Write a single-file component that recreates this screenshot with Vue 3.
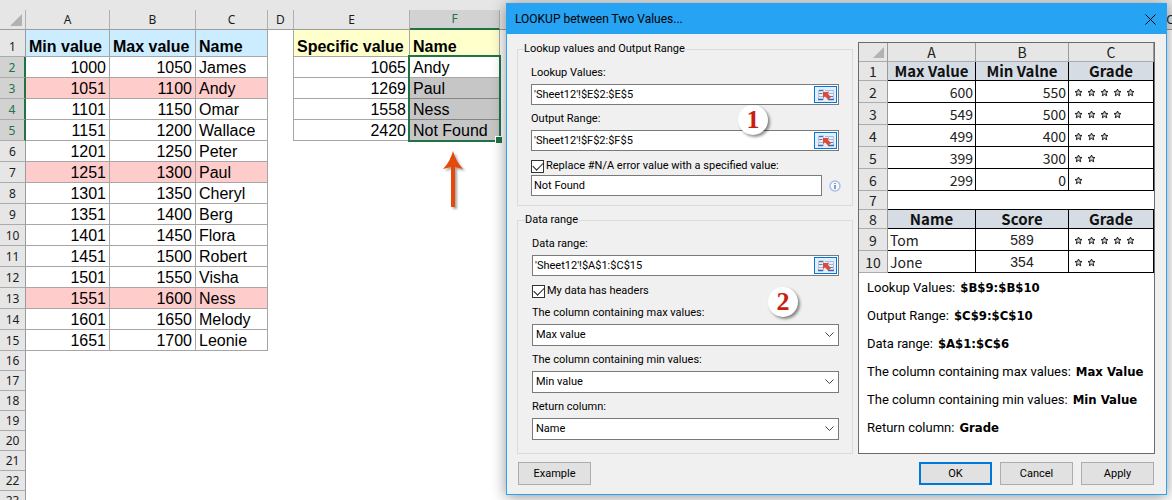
<script setup>
import { ref } from 'vue'

const columns = ['A', 'B', 'C', 'D', 'E', 'F']

const names = ['James', 'Andy', 'Omar', 'Wallace', 'Peter', 'Paul', 'Cheryl', 'Berg', 'Flora', 'Robert', 'Visha', 'Ness', 'Melody', 'Leonie']
const specific = [
  [1065, 'Andy'],
  [1269, 'Paul'],
  [1558, 'Ness'],
  [2420, 'Not Found'],
]
const people = names.map((name, i) => ({
  row: i + 2,
  min: i === 0 ? 1000 : 1001 + i * 50,
  max: 1050 + i * 50,
  name,
  match: ['Andy', 'Paul', 'Ness'].includes(name),
  lookup: specific[i],
}))
const emptyRows = [16, 17, 18, 19, 20, 21, 22, 23]

const grades = [
  { row: 2, max: 600, min: 550, stars: 5 },
  { row: 3, max: 549, min: 500, stars: 4 },
  { row: 4, max: 499, min: 400, stars: 3 },
  { row: 5, max: 399, min: 300, stars: 2 },
  { row: 6, max: 299, min: 0, stars: 1 },
]
const scores = [
  { row: 9, name: 'Tom', score: 589, stars: 5 },
  { row: 10, name: 'Jone', score: 354, stars: 2 },
]
const notes = [
  ['Lookup Values:', '$B$9:$B$10'],
  ['Output Range:', '$C$9:$C$10'],
  ['Data range:', '$A$1:$C$6'],
  ['The column containing max values:', 'Max Value'],
  ['The column containing min values:', 'Min Value'],
  ['Return column:', 'Grade'],
]

const lookupValues = ref("'Sheet12'!$E$2:$E$5")
const outputRange = ref("'Sheet12'!$F$2:$F$5")
const replaceError = ref(true)
const errorText = ref('Not Found')
const dataRange = ref("'Sheet12'!$A$1:$C$15")
const hasHeaders = ref(true)
const maxColumn = ref('Max value')
const minColumn = ref('Min value')
const returnColumn = ref('Name')
const fields = ['Min value', 'Max value', 'Name']
</script>

<template>
  <main class="page">
    <svg class="defs" width="0" height="0" aria-hidden="true">
      <symbol id="pick" viewBox="0 0 16 12">
        <rect x="0" y="1" width="16" height="10" fill="#e8eef8" />
        <path d="M1 1.500h5" stroke="#4a6fb0" stroke-width="1.400" />
        <path d="M7 1.500h9M0 4.500h16M0 7.500h16" stroke="#a3b8dc" fill="none" />
        <path d="M.5 1v10M5.500 1v10M10.500 1v10M15.500 1v10" stroke="#b4c5e3" fill="none" />
        <path d="M0 10.500h5M10 10.500h6" stroke="#3d63a8" stroke-width="1.400" />
        <path d="M1 4.500h3M12 7.500h3" stroke="#5d7fba" stroke-width="1.200" />
        <path d="M5 3h6L9.500 4.500 13 8l-2.800 2.800L7 7.300 5 9z" fill="#dc4a30" />
      </symbol>
      <symbol id="star" viewBox="0 0 9 9">
        <path d="M4.500 1l1 2.300 2.500.2-1.900 1.700.6 2.600-2.200-1.400-2.200 1.400.6-2.600L1 3.500l2.500-.2z" fill="#ccc" stroke="#1a1a1a" stroke-width="1" />
      </symbol>
    </svg>

    <section class="sheet">
      <table class="grid">
        <colgroup>
          <col class="w-row" /><col class="w-a" /><col class="w-b" /><col class="w-c" /><col class="w-d" />
          <col class="w-e" /><col class="w-f" /><col class="w-wide" /><col class="w-o" /><col />
        </colgroup>
        <thead>
          <tr>
            <th class="corner"><svg width="12" height="12" viewBox="0 0 12 12"><path d="M12 0v12H0z" fill="#b2b2b2" /></svg></th>
            <th v-for="c in columns" :key="c" scope="col" :class="{ picked: c === 'F' }">{{ c }}</th>
            <th></th>
            <th scope="col">O</th>
            <th class="last"></th>
          </tr>
        </thead>
        <tbody>
          <tr class="titles">
            <th scope="row">1</th>
            <td class="line blue">Min value</td>
            <td class="line blue">Max value</td>
            <td class="line blue">Name</td>
            <td class="edge"></td>
            <td class="line yellow">Specific value</td>
            <td class="line yellow">Name</td>
            <td colspan="3"></td>
          </tr>
          <tr v-for="p in people" :key="p.row" :class="{ match: p.match }">
            <th scope="row" :class="{ active: p.row < 6 }">{{ p.row }}</th>
            <td class="line num">{{ p.min }}</td>
            <td class="line num">{{ p.max }}</td>
            <td class="line">{{ p.name }}</td>
            <td :class="{ edge: p.lookup }"></td>
            <template v-if="p.lookup">
              <td class="line num plain">{{ p.lookup[0] }}</td>
              <td class="line plain" :class="{ shade: p.row > 2 }">{{ p.lookup[1] }}</td>
              <td colspan="3"></td>
            </template>
            <td v-else colspan="5"></td>
          </tr>
          <tr v-for="r in emptyRows" :key="r" class="empty">
            <th scope="row">{{ r }}</th>
            <td colspan="9"></td>
          </tr>
        </tbody>
      </table>
      <div class="selection"><span class="handle"></span></div>
      <svg class="arrow" width="26" height="62" viewBox="0 0 26 62">
        <path d="M13 0c2 7 5 13 10 18L15 16v40h-4V16l-8 2C8 13 11 7 13 0z" fill="#e64a0a" />
      </svg>
    </section>

    <section class="dialog" role="dialog" aria-labelledby="dlg-title">
      <header class="bar">
        <h1 id="dlg-title">LOOKUP between Two Values...</h1>
        <button class="close" type="button" aria-label="Close">
          <svg width="11" height="11" viewBox="0 0 11 11"><path d="M.5.5l10 10M10.500.5l-10 10" stroke="#000" fill="none" /></svg>
        </button>
      </header>
      <form class="body" @submit.prevent>
        <div class="cols">
          <div class="left">
            <fieldset class="group first">
              <legend>Lookup values and Output Range</legend>
              <label for="f-lookup">Lookup Values:</label>
              <div class="box">
                <input id="f-lookup" v-model="lookupValues" type="text" />
                <button type="button" class="pick" aria-label="Select lookup values"><svg width="16" height="12"><use href="#pick" /></svg></button>
              </div>
              <label for="f-output">Output Range:</label>
              <div class="box">
                <input id="f-output" v-model="outputRange" type="text" />
                <button type="button" class="pick" aria-label="Select output range"><svg width="16" height="12"><use href="#pick" /></svg></button>
              </div>
              <label class="check"><input v-model="replaceError" type="checkbox" />Replace #N/A error value with a specified value:</label>
              <div class="with-info">
                <div class="box"><input v-model="errorText" type="text" aria-label="Replacement value" /></div>
                <svg width="12" height="12" viewBox="0 0 12 12"><circle cx="6" cy="6" r="5" fill="#f7fbff" stroke="#a3c0ea" stroke-width="1.400" /><path d="M6 5v4M6 3v1" stroke="#3f5f90" stroke-width="1.200" /></svg>
              </div>
              <span class="badge one">1</span>
            </fieldset>
            <fieldset class="group second">
              <legend>Data range</legend>
              <label for="f-data">Data range:</label>
              <div class="box">
                <input id="f-data" v-model="dataRange" type="text" />
                <button type="button" class="pick" aria-label="Select data range"><svg width="16" height="12"><use href="#pick" /></svg></button>
              </div>
              <label class="check"><input v-model="hasHeaders" type="checkbox" />My data has headers</label>
              <label for="f-max">The column containing max values:</label>
              <select id="f-max" v-model="maxColumn"><option v-for="f in fields" :key="f">{{ f }}</option></select>
              <label for="f-min">The column containing min values:</label>
              <select id="f-min" v-model="minColumn"><option v-for="f in fields" :key="f">{{ f }}</option></select>
              <label for="f-ret">Return column:</label>
              <select id="f-ret" v-model="returnColumn"><option v-for="f in fields" :key="f">{{ f }}</option></select>
              <span class="badge two">2</span>
            </fieldset>
          </div>

          <div class="panel">
            <table class="mini">
              <colgroup><col class="m-row" /><col class="m-a" /><col class="m-b" /><col /></colgroup>
              <thead>
                <tr>
                  <th class="corner"><svg width="11" height="11" viewBox="0 0 11 11"><path d="M11 0v11H0z" fill="#b2b2b2" /></svg></th>
                  <th scope="col">A</th><th scope="col">B</th><th scope="col">C</th>
                </tr>
              </thead>
              <tbody>
                <tr class="short head"><th scope="row">1</th><td>Max Value</td><td>Min Valne</td><td>Grade</td></tr>
                <tr v-for="g in grades" :key="g.row">
                  <th scope="row">{{ g.row }}</th>
                  <td class="num">{{ g.max }}</td>
                  <td class="num">{{ g.min }}</td>
                  <td><span class="stars"><svg v-for="s in g.stars" :key="s" width="9" height="9"><use href="#star" /></svg></span></td>
                </tr>
                <tr class="short gap"><th scope="row">7</th><td colspan="3"></td></tr>
                <tr class="short head"><th scope="row">8</th><td>Name</td><td>Score</td><td>Grade</td></tr>
                <tr v-for="s in scores" :key="s.row">
                  <th scope="row">{{ s.row }}</th>
                  <td>{{ s.name }}</td>
                  <td class="mid">{{ s.score }}</td>
                  <td><span class="stars"><svg v-for="k in s.stars" :key="k" width="9" height="9"><use href="#star" /></svg></span></td>
                </tr>
              </tbody>
            </table>
            <dl class="notes">
              <div v-for="n in notes" :key="n[0]"><dt>{{ n[0] }}</dt><dd>{{ n[1] }}</dd></div>
            </dl>
          </div>
        </div>
        <footer class="foot">
          <button type="button" class="btn example">Example</button>
          <button type="submit" class="btn main">OK</button>
          <button type="button" class="btn">Cancel</button>
          <button type="button" class="btn">Apply</button>
        </footer>
      </form>
    </section>
  </main>
</template>

<style>
body { margin: 0; overflow: hidden; background: #fff; }
</style>

<style scoped>
* { box-sizing: border-box; }
.page { position: relative; height: 100vh; overflow: hidden; font-family: "Liberation Sans", Arial, sans-serif; color: #000; }
.defs { position: absolute; }
.sheet { padding-top: 10px; background: linear-gradient(#e6e6e6 10px, #fff 10px); }

.grid { width: 100%; min-width: 1211px; table-layout: fixed; border-collapse: separate; border-spacing: 0; font-size: 16px; }
.w-row { width: 26px; } .w-a { width: 84px; } .w-b { width: 86px; } .w-c { width: 72px; } .w-d { width: 26px; }
.w-e { width: 116px; } .w-f { width: 90px; } .w-wide { width: 632px; } .w-o { width: 79px; }
.grid th, .grid td { padding: 0; overflow: hidden; white-space: nowrap; }
.grid th { background: #e6e6e6; font: 400 12px/18px "Noto Sans", sans-serif; color: #1c1c1c; border-right: 1px solid #9b9b9b; border-bottom: 1px solid #ababab; }
.grid thead th { height: 20px; border-bottom-color: #9b9b9b; border-right-color: #b0b0b0; }
.grid thead th.last { border-right: 0; }
.grid thead th.picked { background: #d2d2d2; color: #217346; border-bottom: 2px solid #217346; line-height: 18px; }
.grid .corner { vertical-align: bottom; text-align: right; padding: 0 3px 3px 0; }
.corner svg { display: block; margin-left: auto; }
.grid td { height: 21px; padding: 1px 3px 0; line-height: 19px; }
.grid tbody th { vertical-align: bottom; }
.grid th.active { background: #d2d2d2; color: #217346; border-right: 2px solid #217346; }
.grid .titles td { height: 27px; font-weight: 700; vertical-align: bottom; }
.grid .line { border-right: 1px solid #a6a6a6; border-bottom: 1px solid #a6a6a6; }
.grid .edge { border-right: 1px solid #a6a6a6; }
.grid .blue { background: #ccecff; }
.grid .yellow { background: #ffffcc; }
.grid .match .line { background: #ffcccc; }
.grid .match .plain { background: #fff; }
.grid .line.shade, .grid .match .shade { background: #c6c6c6; border-bottom-color: #848484; }
.num { text-align: right; }
.grid .empty td { height: 20px; padding: 0; }

.selection { position: absolute; left: 408px; top: 55px; width: 93px; height: 87px; border: 2px solid #217346; }
.handle { position: absolute; right: -3px; bottom: -3px; width: 6px; height: 6px; background: #217346; outline: 1px solid #fff; }
.arrow { position: absolute; left: 440px; top: 151px; filter: drop-shadow(2px 2px 1px rgba(0, 0, 0, .35)); }

.dialog { position: absolute; left: 506px; right: 5px; top: 3px; border: 1px solid #26a3f2; background: #f0f0f0; box-shadow: 0 2px 14px rgba(0, 0, 0, .42); font: 11px/14px Roboto, sans-serif; }
.bar { display: flex; align-items: center; justify-content: space-between; height: 30px; padding: 0 10px 0 8px; background: #26a3f2; }
.bar h1 { margin: 0; font: 400 12px/16px Roboto, sans-serif; }
.close { padding: 0; border: 0; background: none; }
.close svg { display: block; }
.body { padding: 8px 11px 9px 10px; }
.cols { display: grid; grid-template-columns: 336fr 297fr; gap: 5px; }
.left { display: flex; flex-direction: column; gap: 7px; min-width: 0; }
.group { position: relative; display: block; min-width: 0; margin: 0; border: 1px solid #dcdcdc; padding: 10px 13px 9px; }
.second { padding-bottom: 13px; padding-left: 14px; }
.group legend { margin-left: -7px; padding: 0; }
.group label { display: block; }
.box { display: flex; height: 21px; margin: 4px 0 7px; border: 1px solid #7a7a7a; background: #fff; }
.box input { flex: 1; min-width: 0; border: 0; padding: 0 2px; background: none; font: inherit; color: #000; outline: 0; }
.pick { width: 23px; margin: 1px; padding: 0; border: 1px solid #0078d7; background: #e3eefa; display: flex; align-items: center; justify-content: center; }
.group .check { display: flex; align-items: center; gap: 2px; height: 14px; margin: 8px 0 2px; }
.second .check { margin-bottom: 8px; }
.check input { appearance: none; position: relative; width: 13px; height: 13px; margin: 0; border: 1px solid #333; background: #fff; }
.check input:checked::after { content: ""; position: absolute; left: 1px; top: 1px; width: 9px; height: 5px; border-left: 1px solid #222; border-bottom: 1px solid #222; transform: rotate(-45deg); }
.with-info { display: flex; align-items: center; gap: 7px; }
.with-info .box { flex: 1; margin: 0; }
.with-info svg { margin-right: -2px; }
select { appearance: none; display: block; width: 100%; height: 22px; margin: 4px 0 7px; padding: 0 3px; border: 1px solid #7a7a7a; border-radius: 0; color: #000; font: inherit; background: #fff url("data:image/svg+xml,%3Csvg xmlns='http://www.w3.org/2000/svg' width='9' height='6'%3E%3Cpath d='M.5.5l4 4 4-4' fill='none' stroke='%23444'/%3E%3C/svg%3E") no-repeat right 4px center; }
.second select:last-of-type { margin-bottom: 0; }
.badge { position: absolute; width: 30px; height: 30px; border-radius: 50%; background: #fff; box-shadow: 2px 2px 3px rgba(0, 0, 0, .45); color: #c8200c; font: 700 26px/30px "Liberation Serif", serif; text-align: center; }
.one { right: 84px; top: 49px; }
.two { right: 54px; top: 60px; }

.panel { border: 1px solid #6b6b6b; background: #fff; min-width: 0; }
.mini { width: 100%; table-layout: fixed; border-collapse: separate; border-spacing: 0; font: 14px/18px "Noto Sans CJK SC", sans-serif; color: #222; }
.m-row { width: 29px; } .m-a { width: 88px; } .m-b { width: 93px; }
.mini th { padding: 0; font-weight: 400; background: #e6e6e6; border-right: 1px solid #9b9b9b; border-bottom: 1px solid #ababab; }
.mini thead th { height: 19px; }
.mini .corner { padding: 0 3px 3px 0; vertical-align: bottom; }
.mini td { height: 22px; padding: 0 2px; border-right: 1px solid #000; border-bottom: 1px solid #000; }
.mini .short td { height: 19px; }
.mini .head td { background: #d6dce4; color: #111; font-size: 15px; font-weight: 700; text-align: center; }
.mini .gap td { border-right: 0; }
.mini .mid { text-align: center; font-family: "Liberation Sans", sans-serif; }
.stars { display: flex; gap: 4px; padding: 2px 0 0 3px; }
.notes { margin: 0; padding: 6px 8px 5px; font-size: 13px; line-height: 18px; }
.notes div { display: flex; align-items: baseline; gap: 5px; height: 18px; margin-bottom: 10px; white-space: nowrap; }
.notes div:last-child { margin-bottom: 0; }
.notes dd { margin: 0; font-family: "DejaVu Sans Condensed", "DejaVu Sans", sans-serif; font-weight: 700; }

.foot { display: flex; gap: 8px; margin-top: 8px; padding-right: 1px; }
.btn { width: 73px; height: 23px; padding: 0; border: 1px solid #adadad; background: #e1e1e1; color: #000; font: inherit; }
.btn.main { border: 2px solid #0078d7; }
.example { margin: 0 auto 0 1px; }
</style>
